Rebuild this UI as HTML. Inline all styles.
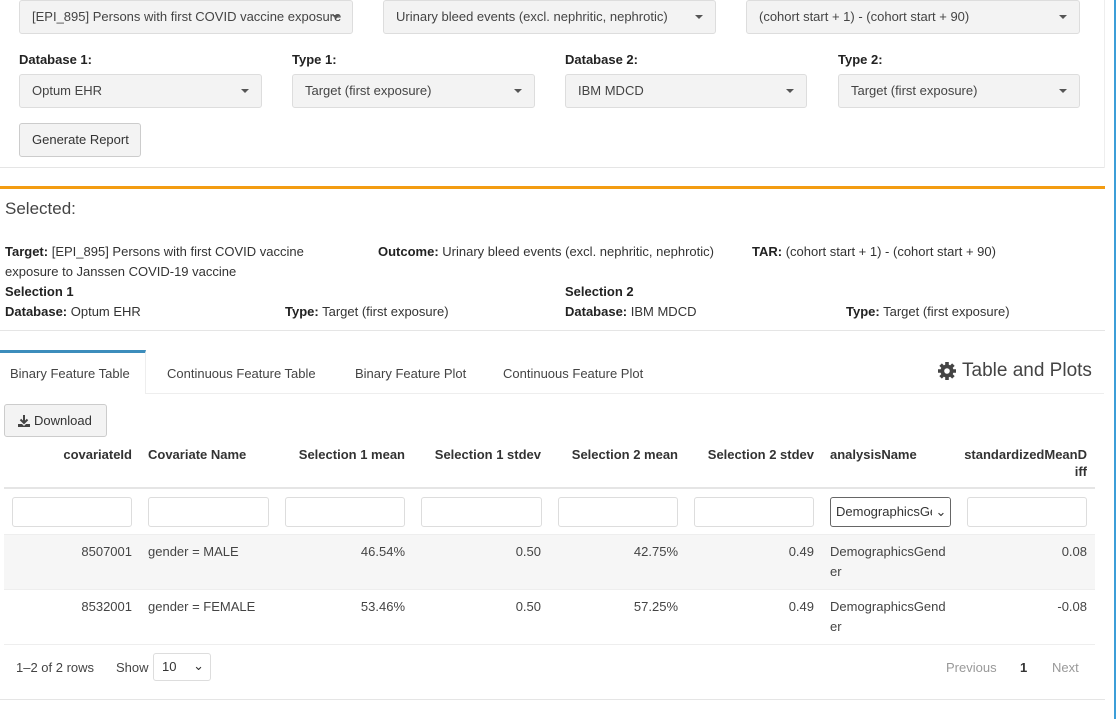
<!DOCTYPE html>
<html><head><meta charset="utf-8"><style>
*{box-sizing:border-box;margin:0;padding:0}
body{width:1120px;height:719px;overflow:hidden;background:#fff;font-family:"Liberation Sans",sans-serif;font-size:13px;color:#333;position:relative}
.a{position:absolute;white-space:nowrap}
.sel{position:absolute;height:34px;background:#f3f3f3;border:1px solid #ddd;border-radius:3px;padding:0 30px 0 12px;line-height:32px;color:#444;overflow:hidden;white-space:nowrap}
.sel:after{content:"";position:absolute;right:12px;top:14px;border-left:4.5px solid transparent;border-right:4.5px solid transparent;border-top:4.5px solid #555}
.lbl{position:absolute;font-weight:bold;color:#222}
.btn{position:absolute;height:34px;background:#f3f3f3;border:1px solid #ccc;border-radius:3px;line-height:32px;padding:0 12px;color:#333;white-space:nowrap}
.hr{position:absolute;height:1px;background:#e5e5e5}
b{color:#222}
.th{position:absolute;font-weight:bold;color:#333;top:446px;line-height:17px}
.inp{position:absolute;top:497px;height:30px;border:1px solid #ddd;border-radius:3px;background:#fff}
.td{position:absolute;line-height:20px;color:#444}
.r{text-align:right}
</style></head><body>
<div class="sel" style="left:19px;top:0;width:334px;">[EPI_895] Persons with first COVID vaccine exposure</div>
<div class="sel" style="left:383px;top:0;width:333px;">Urinary bleed events (excl. nephritic, nephrotic)</div>
<div class="sel" style="left:746px;top:0;width:334px;">(cohort start + 1) - (cohort start + 90)</div>

<div class="lbl" style="left:19px;top:52px">Database 1:</div>
<div class="lbl" style="left:292px;top:52px">Type 1:</div>
<div class="lbl" style="left:565px;top:52px">Database 2:</div>
<div class="lbl" style="left:838px;top:52px">Type 2:</div>
<div class="sel" style="left:19px;top:74px;width:243px;">Optum EHR</div>
<div class="sel" style="left:292px;top:74px;width:243px;">Target (first exposure)</div>
<div class="sel" style="left:565px;top:74px;width:242px;">IBM MDCD</div>
<div class="sel" style="left:838px;top:74px;width:242px;">Target (first exposure)</div>
<div class="btn" style="left:19px;top:123px;width:122px">Generate Report</div>
<div class="hr" style="left:0;top:167px;width:1105px"></div>
<div style="position:absolute;left:1104px;top:0;width:1px;height:168px;background:#eee"></div>
<div style="position:absolute;left:0;top:186px;width:1105px;height:3px;background:#f39c12"></div>
<div style="position:absolute;left:1114px;top:0;width:2px;height:719px;background:#3c9ed8"></div>

<div class="a" style="left:5px;top:199px;font-size:17px;color:#444">Selected:</div>
<div class="a" style="left:5px;top:242px;line-height:20px;white-space:normal;width:320px"><b>Target:</b> [EPI_895] Persons with first COVID vaccine exposure to Janssen COVID-19 vaccine</div>
<div class="a" style="left:378px;top:242px;line-height:20px"><b>Outcome:</b> Urinary bleed events (excl. nephritic, nephrotic)</div>
<div class="a" style="left:752px;top:242px;line-height:20px"><b>TAR:</b> (cohort start + 1) - (cohort start + 90)</div>
<div class="a" style="left:5px;top:282px;line-height:20px"><b>Selection 1</b></div>
<div class="a" style="left:565px;top:282px;line-height:20px"><b>Selection 2</b></div>
<div class="a" style="left:5px;top:302px;line-height:20px"><b>Database:</b> Optum EHR</div>
<div class="a" style="left:285px;top:302px;line-height:20px"><b>Type:</b> Target (first exposure)</div>
<div class="a" style="left:565px;top:302px;line-height:20px"><b>Database:</b> IBM MDCD</div>
<div class="a" style="left:846px;top:302px;line-height:20px"><b>Type:</b> Target (first exposure)</div>
<div class="hr" style="left:0;top:330px;width:1105px"></div>

<div style="position:absolute;left:0;top:350px;width:146px;height:44px;border-top:3px solid #3c8dbc;border-right:1px solid #eee;background:#fff"></div>
<div class="hr" style="left:146px;top:393px;width:958px;background:#eee"></div>
<div class="a" style="left:10px;top:366px;color:#444">Binary Feature Table</div>
<div class="a" style="left:167px;top:366px;color:#444">Continuous Feature Table</div>
<div class="a" style="left:355px;top:366px;color:#444">Binary Feature Plot</div>
<div class="a" style="left:503px;top:366px;color:#444">Continuous Feature Plot</div>
<svg class="a" style="left:937px;top:361px" width="20" height="20" viewBox="0 0 20 20"><g fill="#444"><circle cx="10" cy="10" r="6.5"/><g stroke="#444" stroke-width="3.6"><line x1="10" y1="1" x2="10" y2="19"/><line x1="1" y1="10" x2="19" y2="10"/><line x1="3.6" y1="3.6" x2="16.4" y2="16.4"/><line x1="16.4" y1="3.6" x2="3.6" y2="16.4"/></g></g><circle cx="10" cy="10" r="2.8" fill="#fff"/></svg>
<div class="a" style="left:962px;top:360px;font-size:19px;color:#444">Table and Plots</div>

<div class="btn" style="left:4px;top:404px;width:103px;height:33px;padding:0 0 0 13px;border-color:#ccc">
<svg style="position:absolute;left:12px;top:9px" width="14" height="14" viewBox="0 0 14 14"><path d="M7 1v8M3.5 5.5L7 9l3.5-3.5" stroke="#444" stroke-width="2" fill="none"/><path d="M1 10h4l2 2 2-2h4v3H1z" fill="#444"/></svg>
<span style="margin-left:16px">Download</span></div>

<div class="th r" style="left:4px;width:128px">covariateId</div>
<div class="th" style="left:148px">Covariate Name</div>
<div class="th r" style="left:277px;width:128px">Selection 1 mean</div>
<div class="th r" style="left:413px;width:128px">Selection 1 stdev</div>
<div class="th r" style="left:550px;width:128px">Selection 2 mean</div>
<div class="th r" style="left:686px;width:128px">Selection 2 stdev</div>
<div class="th" style="left:830px">analysisName</div>
<div class="th r" style="left:959px;width:128px;white-space:normal">standardizedMeanD<br>iff</div>
<div style="position:absolute;left:4px;top:487px;width:1091px;height:2px;background:#e5e5e5"></div>
<div class="inp" style="left:12px;width:120px"></div>
<div class="inp" style="left:148px;width:121px"></div>
<div class="inp" style="left:285px;width:120px"></div>
<div class="inp" style="left:421px;width:121px"></div>
<div class="inp" style="left:558px;width:120px"></div>
<div class="inp" style="left:694px;width:120px"></div>
<div class="inp" style="left:830px;width:121px;border-color:#666;padding-left:5px;line-height:28px;color:#333;overflow:hidden;white-space:nowrap">DemographicsGe<span style="position:absolute;right:0;top:0;width:18px;background:#fff;text-align:center">&#8964;</span></div>
<div class="inp" style="left:967px;width:120px"></div>

<div style="position:absolute;left:4px;top:534px;width:1091px;height:55px;background:#f6f6f6;border-top:1px solid #eee"></div>
<div class="hr" style="left:4px;top:589px;width:1091px;background:#eee"></div>
<div class="hr" style="left:4px;top:644px;width:1091px;background:#eee"></div>
<div class="td r" style="left:4px;width:128px;top:542px">8507001</div>
<div class="td" style="left:148px;top:542px">gender = MALE</div>
<div class="td r" style="left:277px;width:128px;top:542px">46.54%</div>
<div class="td r" style="left:413px;width:128px;top:542px">0.50</div>
<div class="td r" style="left:550px;width:128px;top:542px">42.75%</div>
<div class="td r" style="left:686px;width:128px;top:542px">0.49</div>
<div class="td" style="left:830px;top:542px">DemographicsGend<br>er</div>
<div class="td r" style="left:959px;width:128px;top:542px">0.08</div>
<div class="td r" style="left:4px;width:128px;top:597px">8532001</div>
<div class="td" style="left:148px;top:597px">gender = FEMALE</div>
<div class="td r" style="left:277px;width:128px;top:597px">53.46%</div>
<div class="td r" style="left:413px;width:128px;top:597px">0.50</div>
<div class="td r" style="left:550px;width:128px;top:597px">57.25%</div>
<div class="td r" style="left:686px;width:128px;top:597px">0.49</div>
<div class="td" style="left:830px;top:597px">DemographicsGend<br>er</div>
<div class="td r" style="left:959px;width:128px;top:597px">-0.08</div>

<div class="a" style="left:16px;top:660px;color:#444">1–2 of 2 rows</div>
<div class="a" style="left:116px;top:660px;color:#444">Show</div>
<div style="position:absolute;left:153px;top:653px;width:58px;height:28px;border:1px solid #ddd;border-radius:3px;padding-left:8px;line-height:26px;color:#333">10<span style="position:absolute;right:6px;top:-1px">&#8964;</span></div>
<div class="a" style="left:946px;top:660px;color:#999">Previous</div>
<div class="a" style="left:1020px;top:660px;font-weight:bold;color:#333">1</div>
<div class="a" style="left:1052px;top:660px;color:#999">Next</div>
<div class="hr" style="left:0;top:699px;width:1105px"></div>
</body></html>
